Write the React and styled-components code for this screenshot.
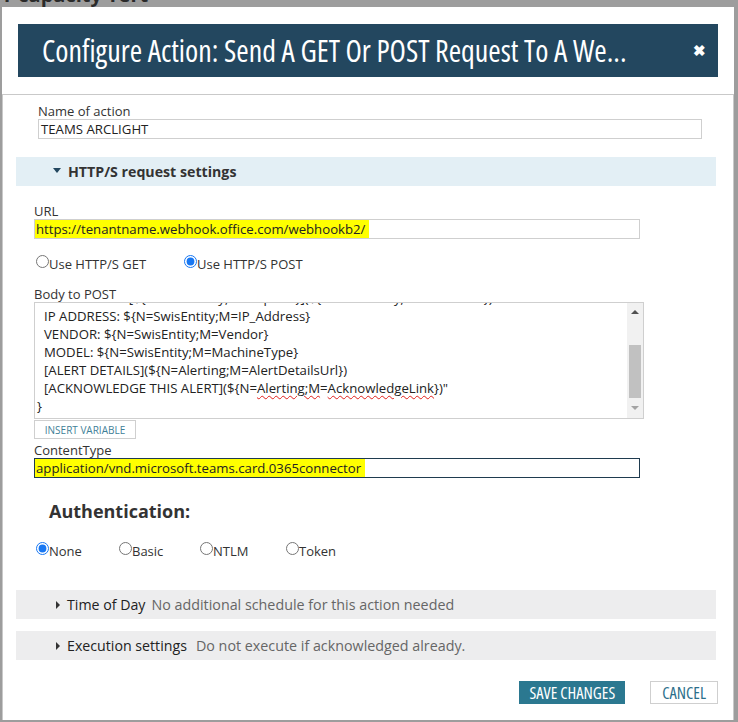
import React from "react";
import styled, { createGlobalStyle } from "styled-components";

const GlobalStyle = createGlobalStyle`
  html, body { margin: 0; padding: 0; }
  body {
    background: #9d9d9d;
    font-family: "Open Sans", "Liberation Sans", sans-serif;
    color: #333;
  }
`;

const Page = styled.div`
  width: 738px;
  height: 722px;
  overflow: hidden;
  background: #9d9d9d;
`;

const BackStrip = styled.div`
  height: 7px;
  overflow: hidden;
  padding-left: 4px;
`;

const BackText = styled.div`
  margin-top: -16px;
  font: 700 20px/22px "Open Sans", sans-serif;
  color: #2a2a2a;
`;

const Dialog = styled.div`
  margin-left: 2px;
  width: 732px;
  height: 713px;
  background: #fff;
  display: flex;
  flex-direction: column;
`;

const HeaderBar = styled.div`
  margin: 17px 16px 0 16px;
  height: 53px;
  background: #23475f;
  display: flex;
  align-items: center;
  justify-content: space-between;
  padding: 0 12px 0 24px;
`;

const Title = styled.h1`
  margin: 0;
  font-family: "Open Sans", sans-serif;
  font-weight: 400;
  font-size: 30px;
  line-height: 36px;
  font-stretch: 75%;
  color: #fff;
  white-space: nowrap;
`;

const Close = styled.span`
  color: #fff;
  font-size: 15px;
  font-weight: 700;
  line-height: 1;
`;

const Body = styled.div`
  margin-top: 17px;
  flex: 1;
  border: 1px solid #c9c9c9;
  border-bottom: none;
  padding: 0 17px 0 13px;
  display: flex;
  flex-direction: column;
`;

const Field = styled.div`
  display: flex;
  flex-direction: column;
  padding-left: ${(p) => p.$indent || 0}px;
  margin-top: ${(p) => p.$top || 0}px;
`;

const Label = styled.label`
  font-size: 13px;
  line-height: 16px;
  color: #333;
`;

const TextInput = styled.div`
  box-sizing: border-box;
  width: ${(p) => p.$w}px;
  height: 20px;
  border: 1px solid ${(p) => (p.$focus ? "#1f3b4f" : "#cfcfcf")};
  font-size: 13.2px;
  line-height: 18px;
  color: #222;
  padding-left: ${(p) => (p.$hl ? 0 : 2)}px;
  white-space: nowrap;
  overflow: hidden;
`;

const Highlight = styled.span`
  display: inline-block;
  background: #ffff00;
  padding: 0 4px 0 1px;
  height: 18px;
`;

const SectionBar = styled.div`
  margin-top: ${(p) => p.$top}px;
  height: 29px;
  background: ${(p) => (p.$blue ? "#e3eff5" : "#ededee")};
  display: flex;
  align-items: center;
  padding-left: ${(p) => (p.$blue ? 37 : 40)}px;
  gap: 5px;
  font-size: 14px;
`;

const Caret = styled.span`
  width: 0;
  height: 0;
  ${(p) =>
    p.$down
      ? `border-left: 4px solid transparent; border-right: 4px solid transparent; border-top: 5px solid #23475f; margin-right: 2px; margin-top: -2px;`
      : `border-top: 4px solid transparent; border-bottom: 4px solid transparent; border-left: 4px solid #333; margin-right: 2px;`}
`;

const SectionTitle = styled.span`
  font-weight: ${(p) => (p.$bold ? 700 : 400)};
  color: ${(p) => (p.$bold ? "#333" : "#222")};
  font-size: 14.2px;
`;

const SectionDesc = styled.span`
  color: #666;
  font-size: 14.3px;
  margin-left: ${(p) => p.$gap || 0}px;
`;

const RadioRow = styled.div`
  display: flex;
  align-items: center;
  margin-top: ${(p) => p.$top || 0}px;
  padding-left: ${(p) => p.$indent || 0}px;
`;

const RadioLabel = styled.label`
  display: flex;
  align-items: center;
  font-size: 13px;
  color: #333;
  width: ${(p) => p.$w}px;
`;

const Radio = styled.input.attrs({ type: "radio" })`
  margin: 0;
  width: 13px;
  height: 13px;
  accent-color: #1877f2;
  position: relative;
  top: -3px;
`;

const TextArea = styled.div`
  box-sizing: border-box;
  width: 610px;
  height: 117px;
  border: 1px solid #cfcfcf;
  display: flex;
  overflow: hidden;
`;

const Lines = styled.div`
  flex: 1;
  overflow: hidden;
  font-size: 13.2px;
  line-height: 18px;
  color: #222;
  white-space: pre;
`;

const Line = styled.div`
  padding-left: ${(p) => (p.$flush ? 2 : 9)}px;
  margin-top: ${(p) => p.$shift || 0}px;
`;

const Squiggle = styled.span`
  text-decoration: underline wavy #e0201b;
  text-decoration-thickness: 1px;
  text-underline-offset: 2px;
`;

const ScrollBar = styled.div`
  width: 16px;
  background: #f1f1f1;
  display: flex;
  flex-direction: column;
  align-items: center;
`;

const Arrow = styled.span`
  width: 0;
  height: 0;
  border-left: 4px solid transparent;
  border-right: 4px solid transparent;
  ${(p) =>
    p.$up
      ? "border-bottom: 4px solid #505050; margin-top: 7px;"
      : "border-top: 4px solid #a3a3a3; margin-top: 8px;"}
`;

const Thumb = styled.div`
  width: 12px;
  height: 53px;
  background: #c1c1c1;
  margin-top: 31px;
`;

const SmallButton = styled.button`
  box-sizing: border-box;
  width: 102px;
  height: 19px;
  margin-top: 1px;
  border: 1px solid #cfcfcf;
  background: #fff;
  color: #3f7f98;
  font-family: "Open Sans", sans-serif;
  font-size: 10px;
  text-transform: uppercase;
  padding: 0;
`;

const AuthHeading = styled.h2`
  margin: 21px 0 0 33px;
  font-size: 18px;
  font-weight: 700;
  line-height: 24px;
  color: #333;
  font-stretch: 90%;
`;

const Footer = styled.div`
  display: flex;
  justify-content: flex-end;
  gap: 25px;
  margin: 21px -2px 0 0;
`;

const Btn = styled.button`
  box-sizing: border-box;
  height: 23px;
  padding: 0 ${(p) => p.$px}px;
  font-family: "Open Sans", sans-serif;
  font-size: 16.5px;
  line-height: 20px;
  font-stretch: 75%;
  background: ${(p) => (p.$primary ? "#2b7890" : "#fff")};
  color: ${(p) => (p.$primary ? "#fff" : "#2d6f8b")};
  border: 1px solid ${(p) => (p.$primary ? "#2b7890" : "#cfcfcf")};
  text-transform: uppercase;
`;

const L = "{";
const R = "}";

export default function App() {
  return (
    <Page>
      <GlobalStyle />
      <BackStrip>
        <BackText>r capacity Tert</BackText>
      </BackStrip>
      <Dialog>
        <HeaderBar>
          <Title>Configure Action: Send A GET Or POST Request To A We...</Title>
          <Close>✖</Close>
        </HeaderBar>
        <Body>
          <Field $indent={22} $top={8}>
            <Label>Name of action</Label>
            <TextInput $w={664}>TEAMS ARCLIGHT</TextInput>
          </Field>

          <SectionBar $blue $top={18}>
            <Caret $down />
            <SectionTitle $bold>HTTP/S request settings</SectionTitle>
          </SectionBar>

          <Field $indent={18} $top={17}>
            <Label>URL</Label>
            <TextInput $w={606} $hl>
              <Highlight>https://tenantname.webhook.office.com/webhookb2/</Highlight>
            </TextInput>
          </Field>

          <RadioRow $top={16} $indent={20}>
            <RadioLabel $w={148}>
              <Radio name="m" />
              Use HTTP/S GET
            </RadioLabel>
            <RadioLabel $w={140}>
              <Radio name="m" defaultChecked />
              Use HTTP/S POST
            </RadioLabel>
          </RadioRow>

          <Field $indent={18} $top={13}>
            <Label>Body to POST</Label>
            <TextArea>
              <Lines>
                <Line $shift={-14}>NODE NAME: [${L}N=SwisEntity;M=Caption{R}](${L}N=SwisEntity;M=DetailsUrl{R})</Line>
                <Line>IP ADDRESS: ${L}N=SwisEntity;M=IP_Address{R}</Line>
                <Line>VENDOR: ${L}N=SwisEntity;M=Vendor{R}</Line>
                <Line>MODEL: ${L}N=SwisEntity;M=MachineType{R}</Line>
                <Line>[ALERT DETAILS](${L}N=Alerting;M=AlertDetailsUrl{R})</Line>
                <Line>
                  [ACKNOWLEDGE THIS ALERT](${L}N=<Squiggle>Alerting;M</Squiggle>=<Squiggle>AcknowledgeLink</Squiggle>{R})"
                </Line>
                <Line $flush>{R}</Line>
              </Lines>
              <ScrollBar>
                <Arrow $up />
                <Thumb />
                <Arrow />
              </ScrollBar>
            </TextArea>
            <SmallButton>Insert Variable</SmallButton>
          </Field>

          <Field $indent={18} $top={3}>
            <Label>ContentType</Label>
            <TextInput $w={606} $hl $focus>
              <Highlight>application/vnd.microsoft.teams.card.0365connector</Highlight>
            </TextInput>
          </Field>

          <AuthHeading>Authentication:</AuthHeading>

          <RadioRow $top={19} $indent={20}>
            <RadioLabel $w={83}>
              <Radio name="a" defaultChecked />
              None
            </RadioLabel>
            <RadioLabel $w={81}>
              <Radio name="a" />
              Basic
            </RadioLabel>
            <RadioLabel $w={86}>
              <Radio name="a" />
              NTLM
            </RadioLabel>
            <RadioLabel $w={80}>
              <Radio name="a" />
              Token
            </RadioLabel>
          </RadioRow>

          <SectionBar $top={30}>
            <Caret />
            <SectionTitle>Time of Day</SectionTitle>
            <SectionDesc $gap={1}>No additional schedule for this action needed</SectionDesc>
          </SectionBar>
          <SectionBar $top={12}>
            <Caret />
            <SectionTitle>Execution settings</SectionTitle>
            <SectionDesc $gap={4}>Do not execute if acknowledged already.</SectionDesc>
          </SectionBar>

          <Footer>
            <Btn $primary $px={9}>Save Changes</Btn>
            <Btn $px={11}>Cancel</Btn>
          </Footer>
        </Body>
      </Dialog>
    </Page>
  );
}
